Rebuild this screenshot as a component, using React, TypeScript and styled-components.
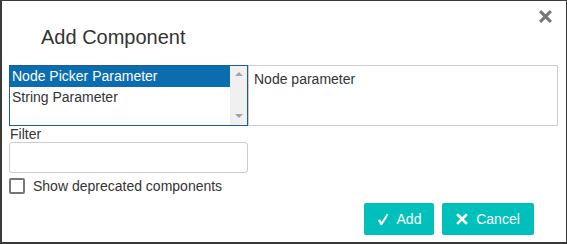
import React from 'react';
import styled, { createGlobalStyle } from 'styled-components';

const GlobalStyle = createGlobalStyle`
  * { box-sizing: border-box; }
  body {
    margin: 0;
    background: #ffffff;
    font-family: 'Liberation Sans', Arial, sans-serif;
    color: #333333;
  }
`;

const Dialog = styled.div`
  width: 567px;
  height: 244px;
  background: #ffffff;
  border-style: solid;
  border-color: #3a3a3a;
  border-width: 1px 1px 2px 2px;
  padding: 0 7px 0 7px;
  display: flex;
  flex-direction: column;
`;

const Header = styled.div`
  display: flex;
  justify-content: space-between;
  align-items: flex-start;
  height: 64px;
`;

const Title = styled.h2`
  margin: 25px 0 0 32px;
  font-size: 20px;
  line-height: 23px;
  font-weight: normal;
  color: #333333;
`;

const CloseButton = styled.button`
  margin: 9px 7px 0 0;
  padding: 0;
  border: none;
  background: none;
  width: 13px;
  height: 14px;
  display: flex;
  cursor: pointer;
`;

const Body = styled.div`
  display: grid;
  grid-template-columns: 239px 310px;
  grid-template-rows: 61px auto;
`;

const ListBox = styled.div`
  border: 1px solid #1d5c97;
  display: flex;
  overflow: hidden;
`;

const Options = styled.div`
  flex: 1;
  display: flex;
  flex-direction: column;
`;

const Option = styled.div<{ $selected?: boolean }>`
  height: 21px;
  line-height: 21px;
  padding-left: 2px;
  font-size: 14px;
  white-space: nowrap;
  background: ${(p) => (p.$selected ? '#0b6daf' : 'transparent')};
  color: ${(p) => (p.$selected ? '#ffffff' : '#333333')};
`;

const ScrollBar = styled.div`
  width: 17px;
  background: #f0f0f0;
  display: flex;
  flex-direction: column;
  justify-content: space-between;
  align-items: center;
  padding: 6px 0 7px;
`;

const Arrow = styled.span<{ $down?: boolean }>`
  width: 0;
  height: 0;
  border-left: 4px solid transparent;
  border-right: 4px solid transparent;
  ${(p) =>
    p.$down
      ? 'border-top: 4px solid #a3a3a3;'
      : 'border-bottom: 4px solid #a3a3a3;'}
`;

const Description = styled.div`
  border: 1px solid #cccccc;
  padding: 5px 5px;
  font-size: 14px;
  line-height: 16px;
  color: #333333;
`;

const FilterColumn = styled.div`
  display: flex;
  flex-direction: column;
`;

const Label = styled.label`
  font-size: 14px;
  line-height: 16px;
  padding-left: 1px;
  color: #333333;
`;

const TextInput = styled.input`
  height: 31px;
  width: 239px;
  border: 1px solid #cccccc;
  border-radius: 3px;
  padding: 0 6px;
  font-family: inherit;
  font-size: 14px;
  outline: none;
`;

const CheckRow = styled.label`
  display: flex;
  align-items: center;
  gap: 8px;
  margin-top: 5px;
  height: 16px;
  font-size: 14px;
  line-height: 16px;
  color: #333333;
`;

const CheckBox = styled.span`
  width: 16px;
  height: 16px;
  border: 2px solid #777777;
  border-radius: 2px;
  background: #ffffff;
`;

const Footer = styled.div`
  display: flex;
  justify-content: flex-end;
  gap: 8px;
  margin-top: 9px;
  padding-right: 25px;
`;

const Button = styled.button<{ $wide?: boolean }>`
  height: 32px;
  width: ${(p) => (p.$wide ? '92px' : '70px')};
  display: flex;
  align-items: center;
  justify-content: center;
  gap: 8px;
  padding: 0;
  border: none;
  border-radius: 2px;
  background: #00c0bb;
  color: #ffffff;
  font-family: inherit;
  font-size: 14px;
  cursor: pointer;
`;

const CheckIcon = () => (
  <svg width="12" height="13" viewBox="0 0 12 13">
    <path d="M0.8 7.2 L3 6.2 L4.6 9 L9.8 0.8 L11.4 1.8 L5 12.2 L3.8 12.2 Z" fill="#ffffff" />
  </svg>
);

const CrossIcon = ({ size, color, stroke }: { size: number; color: string; stroke: number }) => (
  <svg width={size} height={size} viewBox="0 0 12 12">
    <path d="M2 2 L10 10 M10 2 L2 10" stroke={color} strokeWidth={stroke} strokeLinecap="square" />
  </svg>
);

export default function App() {
  return (
    <>
      <GlobalStyle />
      <Dialog>
        <Header>
          <Title>Add Component</Title>
          <CloseButton aria-label="Close">
            <CrossIcon size={13} color="#777777" stroke={2.8} />
          </CloseButton>
        </Header>
        <Body>
          <ListBox>
            <Options>
              <Option $selected>Node Picker Parameter</Option>
              <Option>String Parameter</Option>
            </Options>
            <ScrollBar>
              <Arrow />
              <Arrow $down />
            </ScrollBar>
          </ListBox>
          <Description>Node parameter</Description>
          <FilterColumn>
            <Label>Filter</Label>
            <TextInput />
            <CheckRow>
              <CheckBox />
              Show deprecated components
            </CheckRow>
          </FilterColumn>
        </Body>
        <Footer>
          <Button>
            <CheckIcon />
            Add
          </Button>
          <Button $wide>
            <CrossIcon size={12} color="#ffffff" stroke={2.6} />
            Cancel
          </Button>
        </Footer>
      </Dialog>
    </>
  );
}
